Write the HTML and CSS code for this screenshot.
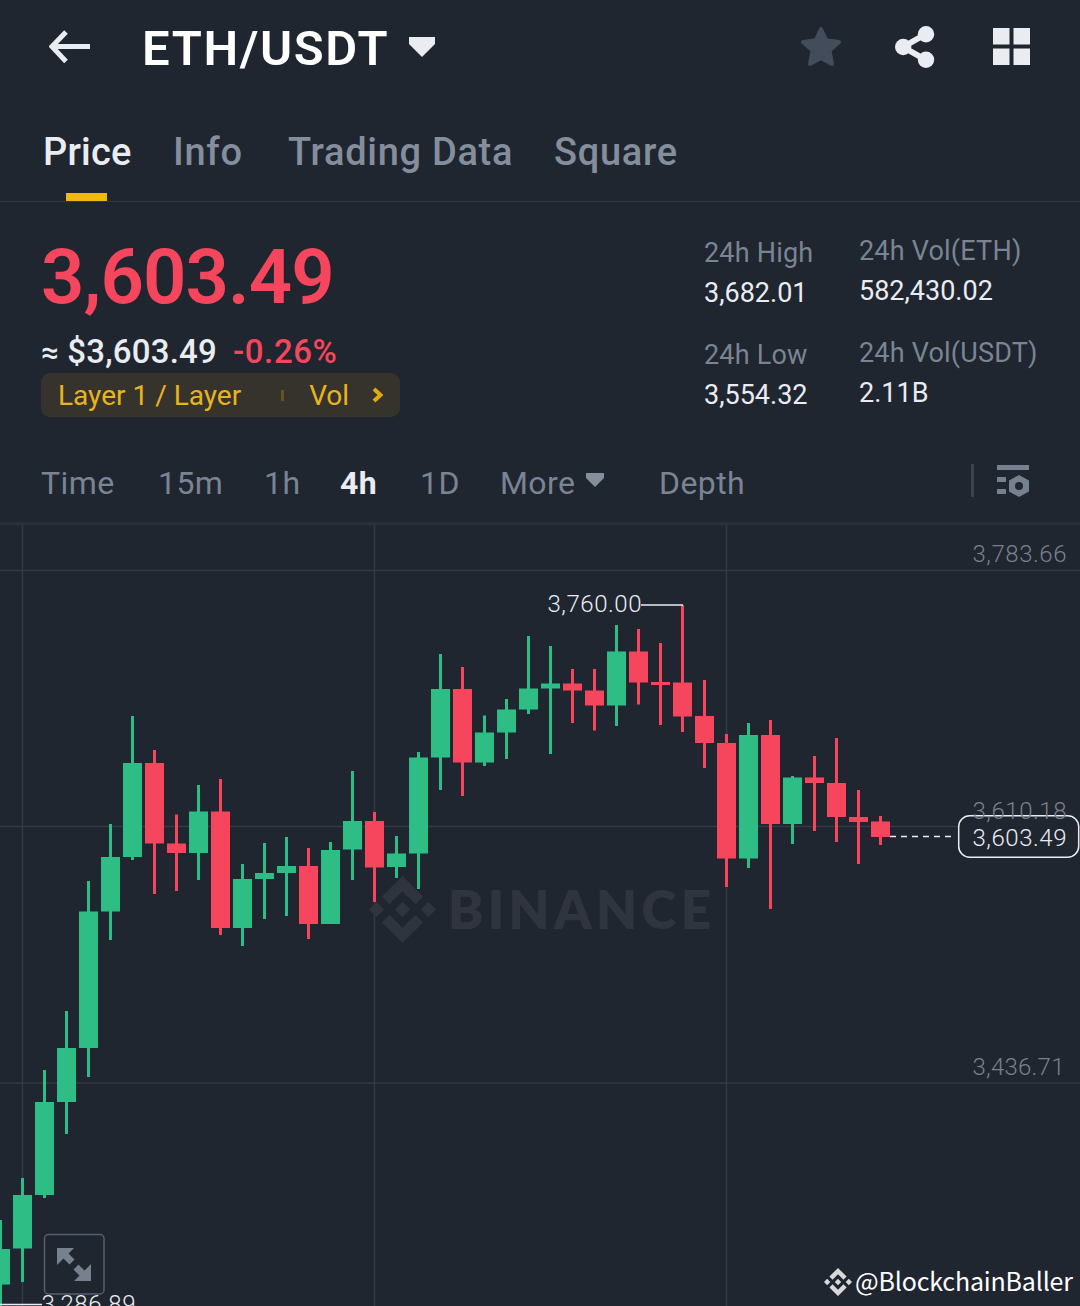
FILE: index.html
```
<!DOCTYPE html>
<html lang="en">
<head>
<meta charset="UTF-8">
<meta name="viewport" content="width=device-width, initial-scale=1.0">
<title>ETH/USDT</title>
<link rel="stylesheet" href="styles.css">
</head>
<body>
<header class="topbar">
  <svg class="back" width="42" height="34" viewBox="0 0 42 34"><path d="M17 2L3 16.500l14 15M3 16.500h38"/></svg>
  <h1>ETH/USDT</h1>
  <svg class="caret" width="26" height="20" viewBox="0 0 26 20"><path d="M0 0h26v7L13 20 0 7z"/></svg>
  <div class="actions">
    <svg class="star" width="42" height="42" viewBox="0 0 42 42"><path d="M21 3l5.200 11.300 12.800 1.700-9.500 8.500 2.500 13.500L21 32l-11 6 2.500-13.500L3 16l12.800-1.700z"/></svg>
    <svg class="share" width="40" height="42" viewBox="0 0 40 42"><path d="M31 8L8 21l23 13"/><circle cx="31" cy="8.300" r="8.200"/><circle cx="8.200" cy="21" r="8.200"/><circle cx="31" cy="33.700" r="8.200"/></svg>
    <svg class="apps" width="38" height="38" viewBox="0 0 38 38"><path d="M0 0h16.500v16.500H0zM20.500 0H37v16.500H20.500zM0 20.500h16.500V37H0zM20.500 20.500H37V37H20.500z"/></svg>
  </div>
</header>

<nav class="tabs">
  <a class="active">Price</a>
  <a>Info</a>
  <a>Trading Data</a>
  <a>Square</a>
</nav>

<section class="summary">
  <div class="quote">
    <div class="price">3,603.49</div>
    <div class="sub"><span class="approx">≈</span> <span>$3,603.49</span><span class="change">-0.26%</span></div>
    <div class="tag">
      <span>Layer 1 / Layer</span>
      <i></i>
      <span>Vol</span>
      <svg width="12" height="16" viewBox="0 0 12 16"><path d="M2 2l6.500 6L2 14"/></svg>
    </div>
  </div>
  <div class="stats">
    <div class="stat-col">
      <dl><dt>24h High</dt><dd>3,682.01</dd></dl>
      <dl><dt>24h Low</dt><dd>3,554.32</dd></dl>
    </div>
    <div class="stat-col vol">
      <dl><dt>24h Vol(ETH)</dt><dd>582,430.02</dd></dl>
      <dl><dt>24h Vol(USDT)</dt><dd>2.11B</dd></dl>
    </div>
  </div>
</section>

<nav class="intervals">
  <a>Time</a>
  <a>15m</a>
  <a>1h</a>
  <a class="active">4h</a>
  <a>1D</a>
  <a>More <svg width="18" height="14" viewBox="0 0 18 14"><path d="M0 0h18v5L9 14 0 5z"/></svg></a>
  <a>Depth</a>
  <svg class="settings" width="60" height="34" viewBox="0 0 60 34">
    <path class="sep" d="M1.500 0v33"/>
    <path d="M26 1h32v5H26zM26 13h9v5h-9zM26 25h9v5h-9z"/>
    <path fill-rule="evenodd" d="M48 11l10 5.500v11L48 33l-10-5.500v-11zM48 18a4 4 0 1 0 0 8 4 4 0 0 0 0-8z"/>
  </svg>
</nav>

<main class="chart">
  <svg width="1080" height="781" viewBox="0 525 1080 781">
    <defs>
      <symbol id="logo" viewBox="0 0 126.600 126.600">
        <path d="M38.730 53.200l24.590-24.580 24.600 24.600 14.300-14.310L63.320 0 24.420 38.900zM0 63.310L14.300 49l14.310 14.310-14.310 14.300zM38.730 73.410L63.320 98l24.600-24.600 14.310 14.290-38.900 38.910L24.420 87.700zM98 63.310L112.300 49l14.300 14.300-14.300 14.320zM77.830 63.300L63.320 48.780 48.810 63.280 63.320 77.800z"/>
      </symbol>
    </defs>

    <path class="grid" d="M0 570.500H1080M0 826.500H1080M0 1083H1080M22.500 525V1306M374.500 525V1306M726.500 525V1306"/>

    <g class="brand">
      <use href="#logo" x="369" y="876" width="67" height="67"/>
      <text x="448" y="929" textLength="263">BINANCE</text>
    </g>

    <!-- wicks -->
    <path class="up wick" d="M.5 1220V1306M22.500 1178V1282M44.500 1070V1198M66.500 1011V1134M88.500 881V1077M110.500 824V940M132.500 716V860M198.500 785V880M242.500 864V946M264.500 843V919M286.500 837V916M330.500 842V924M352.500 771V880M396.500 836V878M418.500 752V889M440.500 654V790M484.500 715.500V766M506.500 699V759M528.500 636V714M550.500 646V754M616.500 625V726M748.500 723V868M792.500 776V844"/>
    <path class="down wick" d="M154.500 750V894M176.500 814.500V891M220.500 779V935M308.500 848V939M374.500 812V902M462.500 667V796M572.500 669V723M594.500 669V730.500M638.500 629V704.500M660.500 643V725M682.500 605V732M704.500 680V768M726.500 734V887M770.500 720V909M814.500 756V831M836.500 738V842M858.500 790V864M880.500 816V845"/>
    <!-- bodies -->
    <path class="up body" d="M.5 1249V1284.500M22.500 1195V1248.500M44.500 1102V1195M66.500 1048V1102M88.500 911.500V1048M110.500 857V911.500M132.500 763V857M198.500 811.500V853M242.500 879V928M264.500 873V879M286.500 866V873M330.500 850V924M352.500 821V849.500M396.500 853.500V867M418.500 757.500V853.500M440.500 689V757.500M484.500 732.500V762.500M506.500 709.500V732.500M528.500 688.500V709.500M550.500 683.500V688.500M616.500 651.500V705.500M748.500 735V858.500M792.500 777.500V824"/>
    <path class="down body" d="M154.500 763V843.500M176.500 843.500V853M220.500 811.500V928M308.500 866V924M374.500 821V867.500M462.500 689V762.500M572.500 683.500V690.500M594.500 690.500V705.500M638.500 651.500V682.500M660.500 682V685M682.500 682.500V716.500M704.500 716V743M726.500 743V858.500M770.500 735V824M814.500 777.500V783M836.500 783V817M858.500 817V822M880.500 821.500V837"/>

    <path class="last-line" d="M890 836.500H952"/>
    <rect class="last-box" x="958.700" y="815.700" width="120" height="41.500" rx="11"/>
    <text class="label" x="972.500" y="846" textLength="94">3,603.49</text>

    <g class="axis">
      <text x="972.500" y="562" textLength="94">3,783.66</text>
      <text x="972.500" y="818.500" textLength="94">3,610.18</text>
      <text x="972.500" y="1075" textLength="92">3,436.71</text>
    </g>

    <path class="marker" d="M641 605H683M0 1304.500H42"/>
    <text class="label" x="547.500" y="612" textLength="94">3,760.00</text>
    <text class="label" x="41.500" y="1311.500" textLength="94">3,286.89</text>

    <g class="expand">
      <rect x="44.500" y="1234.500" width="59.500" height="59.500" rx="4"/>
      <path d="M57 1248h17l-5.500 5.500 6 6-5 5-6-6L57 1265zM91 1281H74l5.500-5.500-6-6 5-5 6 6L91 1264z"/>
    </g>

    <g class="author">
      <use href="#logo" x="824" y="1268" width="28" height="28"/>
      <text x="855" y="1291" textLength="218">@BlockchainBaller</text>
    </g>
  </svg>
</main>
</body>
</html>
```
FILE: styles.css
```
body {
  margin: 0;
  width: 1080px;
  height: 1306px;
  overflow: hidden;
  background-color: #1f2630;
  color: #eaecf2;
  font-family: Roboto, "Liberation Sans", sans-serif;
}
svg {
  display: block;
  flex: none;
}
.topbar {
  display: flex;
  align-items: center;
  height: 93px;
  box-sizing: border-box;
  padding: 0 49px;
}
.topbar svg {
  fill: #eaecf2;
}
.topbar .back {
  fill: none;
  stroke: #eaecf2;
  stroke-width: 5;
}
h1 {
  width: 266px;
  box-sizing: border-box;
  margin: 0;
  padding: 5px 0 0 51px;
  color: #fff;
  font-size: 49px;
  line-height: 56px;
  font-weight: 600;
  letter-spacing: 1.6px;
  white-space: nowrap;
}
.topbar .caret {
  margin-left: 52px;
}
.actions {
  display: flex;
  align-items: center;
  margin-left: auto;
}
.topbar .star {
  margin-right: 53px;
  fill: #434c5a;
  stroke: #434c5a;
  stroke-width: 4;
  stroke-linejoin: round;
}
.actions .share {
  margin-right: 58px;
}
.share path {
  fill: none;
  stroke: #eaecf2;
  stroke-width: 6;
}
.tabs {
  display: grid;
  grid-template-columns: 130px 115px 266px auto;
  height: 108px;
  padding-left: 43px;
  border-bottom: 1px solid #2f3843;
  color: #848e9c;
  font-size: 38px;
  line-height: 118px;
  font-weight: 500;
  letter-spacing: 0.7px;
}
.tabs .active {
  position: relative;
  color: #eaecf2;
  letter-spacing: 0.2px;
}
.tabs .active::after {
  content: "";
  position: absolute;
  left: 23px;
  bottom: 10px;
  width: 41px;
  height: 8px;
  background-color: #f0b90b;
}
.summary {
  display: flex;
  justify-content: space-between;
  height: 240px;
  box-sizing: border-box;
  padding: 35px 0 0 41px;
}
.price {
  color: #f6465d;
  font-size: 76px;
  line-height: 80px;
  font-weight: 600;
  letter-spacing: -0.9px;
}
.sub {
  margin-top: 15px;
  font-size: 33px;
  line-height: 40px;
  font-weight: 500;
  letter-spacing: 0.2px;
  white-space: nowrap;
}
.approx {
  font-size: 31px;
}
.change {
  margin-left: 16px;
  color: #f6465d;
  letter-spacing: 0.6px;
}
.tag {
  display: flex;
  align-items: center;
  width: 359px;
  height: 44px;
  box-sizing: border-box;
  padding: 0 16px 0 17px;
  border-radius: 9px;
  background-color: #35332c;
  color: #e8b41c;
  font-size: 28px;
}
.tag i {
  width: 3px;
  height: 11px;
  margin: 0 25px 0 40px;
  background-color: #65531f;
}
.tag svg {
  margin-left: auto;
  fill: none;
  stroke: #e0a90f;
  stroke-width: 4;
}
.stats {
  display: grid;
  grid-template-columns: 155px 221px;
  font-size: 27px;
  line-height: 40px;
  margin-top: -4px;
}
.stat-col dl {
  margin: 0 0 22px;
}
.stat-col dt {
  color: #7b8492;
  letter-spacing: 0.2px;
}
.stat-col dd {
  margin: 0;
}
.stat-col.vol {
  margin-top: -2px;
}
.intervals {
  display: grid;
  grid-template-columns: 117px 106px 76px 80px 80px 159px 312px auto;
  align-items: center;
  height: 80px;
  padding-left: 41px;
  border-bottom: 3px solid #2a303a;
  color: #7b8492;
  font-size: 32px;
  letter-spacing: 0.4px;
}
.intervals a {
  display: flex;
  padding-top: 2px;
}
.intervals a svg {
  margin: 9px 0 0 11px;
  fill: #848e9c;
}
.intervals .active {
  color: #eaecf2;
  font-weight: 700;
}
.settings {
  margin-top: -2px;
  fill: #76808f;
}
.settings .sep {
  stroke: #3a424e;
  stroke-width: 3;
}
.grid {
  stroke: #323a45;
  stroke-width: 1.5;
}
.wick {
  fill: none;
  stroke-width: 3;
}
.body {
  fill: none;
  stroke-width: 19;
}
.up {
  stroke: #2ebd85;
}
.down {
  stroke: #f6465d;
}
.brand {
  fill: #30343e;
  font-family: Lato, sans-serif;
  font-size: 53px;
  font-weight: 800;
}
.axis {
  fill: #79808c;
  font-size: 24px;
  font-weight: 300;
}
.label {
  fill: #eaecf2;
  font-size: 24px;
  font-weight: 300;
}
.last-line {
  stroke: #eaecf2;
  stroke-width: 1.5;
  stroke-dasharray: 6 5;
}
.last-box {
  fill: #1f2630;
  stroke: #eaecf2;
  stroke-width: 1.5;
}
.marker {
  stroke: #eaecf2;
  stroke-width: 1.5;
}
.expand rect {
  fill: #1f2630;
  stroke: #565f6d;
  stroke-width: 1.5;
}
.expand path {
  fill: #76808f;
}
.author {
  fill: #d9d9d9;
}
.author text {
  fill: #fff;
  font-family: "Noto Sans CJK SC", sans-serif;
  font-size: 25px;
  font-weight: 400;
}
```
